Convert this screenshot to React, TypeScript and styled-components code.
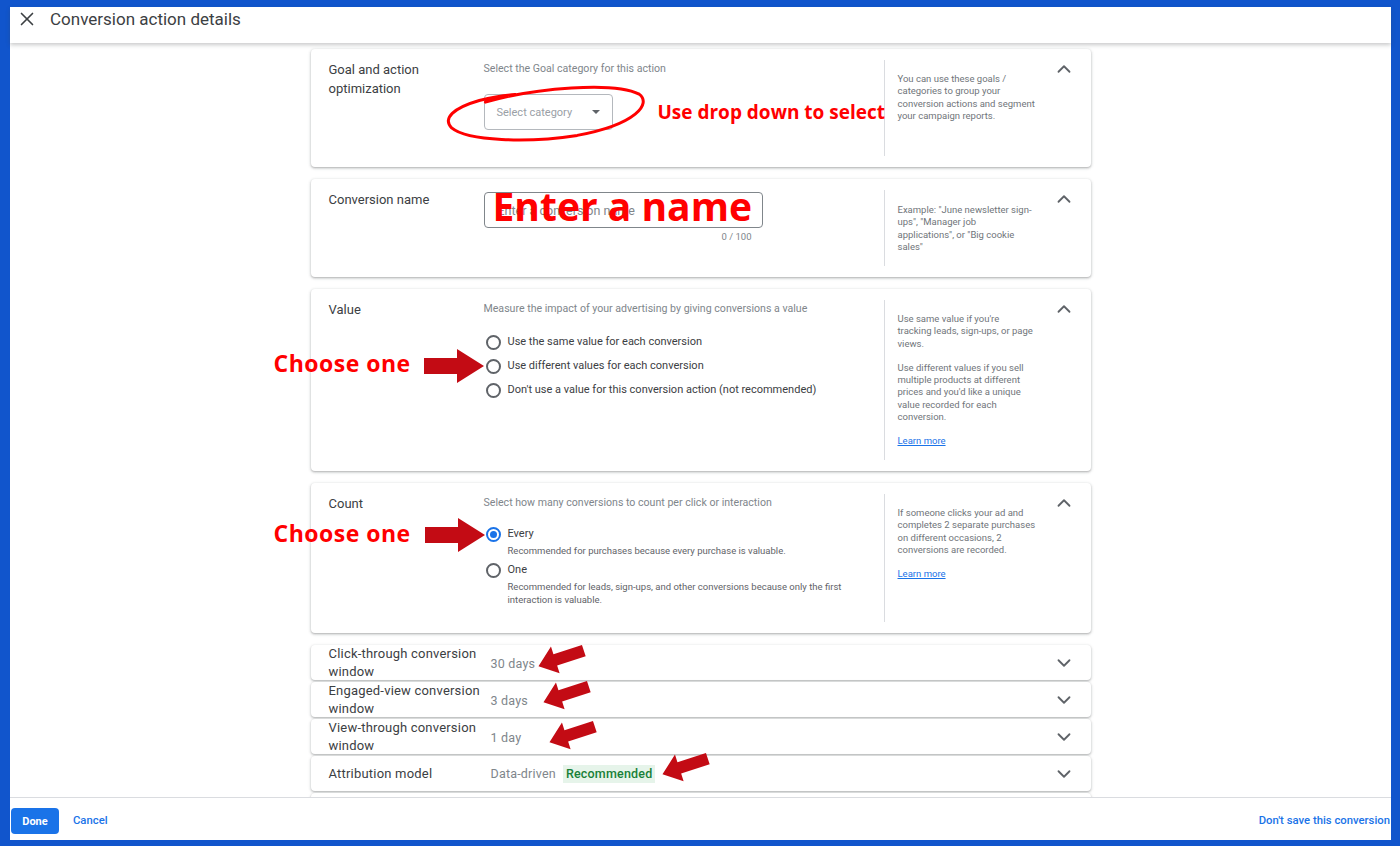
import styled, { createGlobalStyle } from "styled-components";
import { ChevronDown, ChevronUp, X } from "lucide-react";

const GlobalStyle = createGlobalStyle`
  html, body {
    margin: 0;
    padding: 0;
  }
  body {
    font-family: Roboto, "Liberation Sans", Arial, sans-serif;
    color: #3c4043;
  }
`;

const Frame = styled.div`
  width: 1400px;
  height: 846px;
  box-sizing: border-box;
  padding: 7px 9px 6px 10px;
  background: #1155cc;
`;

const Panel = styled.div`
  height: 100%;
  display: flex;
  flex-direction: column;
  background: #fff;
`;

const Header = styled.header`
  position: relative;
  z-index: 2;
  height: 36px;
  flex-shrink: 0;
  display: flex;
  align-items: flex-start;
  gap: 12px;
  padding-left: 6px;
  background: #fff;
  box-shadow: 0 2px 4px rgba(60, 64, 67, 0.28);
  svg {
    margin-top: 1px;
    color: #3c4043;
  }
`;

const Title = styled.h1`
  margin: 0;
  font-size: 17px;
  line-height: 24px;
  font-weight: 400;
  color: #3c4043;
`;

const Body = styled.main`
  flex: 1;
  overflow: hidden;
`;

const Column = styled.div`
  width: 780px;
  margin: 0 auto;
  padding-top: 6px;
  display: flex;
  flex-direction: column;
  gap: 12px;
`;

const Card = styled.section<{ $h: number }>`
  position: relative;
  height: ${p => p.$h}px;
  box-sizing: border-box;
  display: grid;
  grid-template-columns: 155px 400px 1fr 36px;
  padding: 11px 9px 11px 18px;
  background: #fff;
  border-radius: 4px;
  box-shadow: 0 1px 2px rgba(60, 64, 67, 0.3), 0 1px 3px 1px rgba(60, 64, 67, 0.12);
`;

const Label = styled.div`
  font-size: 13px;
  line-height: 19px;
  color: #3c4043;
  padding-right: 20px;
`;

const Main = styled.div`
  display: flex;
  flex-direction: column;
  align-items: flex-start;
`;

const Subtitle = styled.div`
  margin-top: 1px;
  font-size: 10.6px;
  line-height: 16px;
  color: #80868b;
`;

const Help = styled.aside<{ $top?: number }>`
  border-left: 1px solid #dadce0;
  padding: ${p => p.$top ?? 13}px 7px 0 13px;
  font-size: 9.5px;
  line-height: 12.3px;
  color: #70757a;
  p {
    margin: 0 0 12px;
  }
`;

const Line = styled.span`
  display: block;
  white-space: nowrap;
`;

const LearnMore = styled.a`
  color: #1a73e8;
  text-decoration: underline;
`;

const Toggle = styled.div`
  display: flex;
  justify-content: center;
  align-items: flex-start;
  color: #5f6368;
  svg {
    margin-top: -2px;
  }
`;

const Select = styled.div`
  margin-top: 17px;
  width: 129px;
  height: 36px;
  box-sizing: border-box;
  border: 1px solid #b4b8bd;
  border-radius: 4px;
  display: flex;
  align-items: center;
  justify-content: space-between;
  padding: 0 12px 0 12px;
  font-size: 11px;
  color: #9aa0a6;
  &::after {
    content: "";
    border-left: 4px solid transparent;
    border-right: 4px solid transparent;
    border-top: 4px solid #5f6368;
  }
`;

const Field = styled.input`
  margin-top: 2px;
  width: 279px;
  height: 36px;
  box-sizing: border-box;
  border: 1px solid #80868b;
  border-radius: 4px;
  padding: 0 13px;
  font-family: inherit;
  font-size: 12.5px;
  color: #3c4043;
  &::placeholder {
    color: #80868b;
  }
`;

const Counter = styled.div`
  width: 279px;
  box-sizing: border-box;
  padding-right: 11px;
  margin-top: 3px;
  text-align: right;
  font-size: 9.5px;
  line-height: 12px;
  color: #80868b;
`;

const Options = styled.div<{ $gap: number; $top: number }>`
  margin-top: ${p => p.$top}px;
  display: flex;
  flex-direction: column;
  gap: ${p => p.$gap}px;
`;

const Option = styled.label<{ $lh: number }>`
  display: flex;
  align-items: flex-start;
  gap: 7px;
  padding-left: 2px;
  font-size: 11px;
  line-height: ${p => p.$lh}px;
  color: #3c4043;
`;

const Radio = styled.span<{ $on?: boolean; $lh: number }>`
  flex-shrink: 0;
  width: 15px;
  height: 15px;
  box-sizing: border-box;
  margin-top: ${p => (p.$lh - 15) / 2}px;
  border-radius: 50%;
  border: 2px solid ${p => (p.$on ? "#1a73e8" : "#5f6368")};
  display: flex;
  align-items: center;
  justify-content: center;
  &::after {
    content: "";
    width: 7px;
    height: 7px;
    border-radius: 50%;
    background: ${p => (p.$on ? "#1a73e8" : "transparent")};
  }
`;

const OptionSub = styled.div`
  font-size: 9.5px;
  line-height: 13px;
  color: #5f6368;
`;

const Rows = styled.div`
  display: flex;
  flex-direction: column;
  gap: 2px;
`;

const Row = styled.div`
  position: relative;
  height: 35px;
  display: grid;
  grid-template-columns: 162px 1fr 36px;
  align-items: center;
  padding: 0 9px 0 18px;
  background: #fff;
  border-radius: 4px;
  box-shadow: 0 1px 2px rgba(60, 64, 67, 0.3), 0 1px 3px 1px rgba(60, 64, 67, 0.1);
`;

const RowLabel = styled.div`
  font-size: 13px;
  letter-spacing: 0.2px;
  line-height: 18px;
  color: #3c4043;
`;

const RowValue = styled.div`
  display: flex;
  align-items: center;
  gap: 7px;
  font-size: 12.5px;
  letter-spacing: 0.2px;
  color: #80868b;
`;

const Chip = styled.span`
  padding: 0 3px;
  height: 18px;
  line-height: 18px;
  background: #e6f4ea;
  color: #188038;
  font-weight: 500;
`;

const RowToggle = styled.div`
  display: flex;
  justify-content: center;
  color: #5f6368;
`;

const Footer = styled.footer`
  height: 43px;
  flex-shrink: 0;
  box-sizing: border-box;
  border-top: 1px solid #dadce0;
  display: flex;
  align-items: flex-start;
  padding: 10px 1px 0 1px;
  gap: 14px;
  font-size: 11.3px;
  line-height: 26px;
`;

const Done = styled.button`
  width: 48px;
  height: 26px;
  border: 0;
  border-radius: 4px;
  background: #1a73e8;
  color: #fff;
  font-family: inherit;
  font-size: 11px;
  font-weight: 700;
`;

const TextLink = styled.a<{ $end?: boolean }>`
  color: #1a73e8;
  font-weight: 500;
  text-decoration: none;
  margin-left: ${p => (p.$end ? "auto" : "0")};
`;

/* red annotations drawn over the screenshot */
const Note = styled.span<{ $x: number; $y: number; $size: number; $track?: number }>`
  position: absolute;
  z-index: 3;
  left: ${p => p.$x}px;
  top: ${p => p.$y}px;
  transform: translateY(-50%);
  white-space: nowrap;
  font-family: "Open Sans", "DejaVu Sans", sans-serif;
  font-weight: 700;
  font-size: ${p => p.$size}px;
  letter-spacing: ${p => p.$track ?? 0}px;
  line-height: 1;
  color: #ff0000;
  pointer-events: none;
`;

const Mark = styled.svg<{ $x: number; $y: number; $rot?: number }>`
  position: absolute;
  z-index: 3;
  left: ${p => p.$x}px;
  top: ${p => p.$y}px;
  transform: rotate(${p => p.$rot ?? 0}deg);
  overflow: visible;
  pointer-events: none;
`;

function BlockArrow({ x, y }: { x: number; y: number }) {
  return (
    <Mark $x={x} $y={y} width="60" height="34" viewBox="0 0 60 34">
      <polygon points="0,9 33,9 33,0 60,17 33,34 33,25 0,25" fill="#c30b14" />
    </Mark>
  );
}

function SlantArrow({ x, y }: { x: number; y: number }) {
  return (
    <Mark $x={x} $y={y} $rot={-18} width="48" height="28" viewBox="0 0 48 28">
      <polygon points="0,15 18,0 18,8 48,8 48,20 18,20 18,28" fill="#c30b14" />
    </Mark>
  );
}

function Chevron({ open }: { open?: boolean }) {
  return open ? <ChevronUp size={22} strokeWidth={2} /> : <ChevronDown size={22} strokeWidth={2} />;
}

function Lines({ lines }: { lines: string[] }) {
  return (
    <>
      {lines.map(l => (
        <Line key={l}>{l}</Line>
      ))}
    </>
  );
}

const windows = [
  { label: "Click-through conversion window", value: "30 days", ax: 226, ay: -1 },
  { label: "Engaged-view conversion window", value: "3 days", ax: 231, ay: -2 },
  { label: "View-through conversion window", value: "1 day", ax: 237, ay: 1 },
];

export default function App() {
  return (
    <Frame>
      <GlobalStyle />
      <Panel>
        <Header>
          <X size={22} strokeWidth={1.8} />
          <Title>Conversion action details</Title>
        </Header>
        <Body>
          <Column>
            <Card $h={118}>
              <Label>Goal and action optimization</Label>
              <Main>
                <Subtitle>Select the Goal category for this action</Subtitle>
                <Select>Select category</Select>
              </Main>
              <Help>
                <Lines
                  lines={[
                    "You can use these goals /",
                    "categories to group your",
                    "conversion actions and segment",
                    "your campaign reports.",
                  ]}
                />
              </Help>
              <Toggle>
                <Chevron open />
              </Toggle>
              <Mark $x={135} $y={36} width="200" height="56" viewBox="0 0 200 56">
                <path
                  d="M40 14 C90 2 170 0 194 14 C206 24 190 44 130 52 C80 57 20 52 5 38 C-4 28 8 18 34 12 C50 9 62 8 70 8"
                  fill="none"
                  stroke="#ff0000"
                  strokeWidth="3"
                  strokeLinecap="round"
                  transform="rotate(-3 100 28)"
                />
              </Mark>
              <Note $x={347} $y={63} $size={19}>Use drop down to select</Note>
            </Card>

            <Card $h={98}>
              <Label>Conversion name</Label>
              <Main>
                <Field placeholder="Enter a conversion name" />
                <Counter>0 / 100</Counter>
              </Main>
              <Help $top={14}>
                <Lines
                  lines={[
                    'Example: "June newsletter sign-',
                    'ups", "Manager job',
                    'applications", or "Big cookie',
                    'sales"',
                  ]}
                />
              </Help>
              <Toggle>
                <Chevron open />
              </Toggle>
              <Note $x={182} $y={26} $size={39}>Enter a name</Note>
            </Card>

            <Card $h={182}>
              <Label>Value</Label>
              <Main>
                <Subtitle>Measure the impact of your advertising by giving conversions a value</Subtitle>
                <Options $gap={0} $top={13}>
                  {[
                    "Use the same value for each conversion",
                    "Use different values for each conversion",
                    "Don't use a value for this conversion action (not recommended)",
                  ].map(text => (
                    <Option key={text} $lh={24}>
                      <Radio $lh={24} />
                      {text}
                    </Option>
                  ))}
                </Options>
              </Main>
              <Help>
                <p>
                  <Lines lines={["Use same value if you're", "tracking leads, sign-ups, or page", "views."]} />
                </p>
                <p>
                  <Lines
                    lines={[
                      "Use different values if you sell",
                      "multiple products at different",
                      "prices and you'd like a unique",
                      "value recorded for each",
                      "conversion.",
                    ]}
                  />
                </p>
                <LearnMore href="#">Learn more</LearnMore>
              </Help>
              <Toggle>
                <Chevron open />
              </Toggle>
              <Note $x={-37} $y={74} $size={23} $track={0.5}>Choose one</Note>
              <BlockArrow x={113} y={60} />
            </Card>

            <Card $h={150}>
              <Label>Count</Label>
              <Main>
                <Subtitle>Select how many conversions to count per click or interaction</Subtitle>
                <Options $gap={3} $top={13}>
                  <Option $lh={20}>
                    <Radio $lh={20} $on />
                    <div>
                      Every
                      <OptionSub>Recommended for purchases because every purchase is valuable.</OptionSub>
                    </div>
                  </Option>
                  <Option $lh={20}>
                    <Radio $lh={20} />
                    <div>
                      One
                      <OptionSub>
                        Recommended for leads, sign-ups, and other conversions because only the first
                        interaction is valuable.
                      </OptionSub>
                    </div>
                  </Option>
                </Options>
              </Main>
              <Help>
                <p>
                  <Lines
                    lines={[
                      "If someone clicks your ad and",
                      "completes 2 separate purchases",
                      "on different occasions, 2",
                      "conversions are recorded.",
                    ]}
                  />
                </p>
                <LearnMore href="#">Learn more</LearnMore>
              </Help>
              <Toggle>
                <Chevron open />
              </Toggle>
              <Note $x={-37} $y={50} $size={23} $track={0.5}>Choose one</Note>
              <BlockArrow x={114} y={35} />
            </Card>

            <Rows>
              {windows.map(w => (
                <Row key={w.label}>
                  <RowLabel>{w.label}</RowLabel>
                  <RowValue>{w.value}</RowValue>
                  <RowToggle>
                    <Chevron />
                  </RowToggle>
                  <SlantArrow x={w.ax} y={w.ay} />
                </Row>
              ))}
              <Row>
                <RowLabel>Attribution model</RowLabel>
                <RowValue>
                  Data-driven <Chip>Recommended</Chip>
                </RowValue>
                <RowToggle>
                  <Chevron />
                </RowToggle>
                <SlantArrow x={350} y={-4} />
              </Row>
              <Row />
            </Rows>
          </Column>
        </Body>
        <Footer>
          <Done>Done</Done>
          <TextLink href="#">Cancel</TextLink>
          <TextLink href="#" $end>
            Don't save this conversion
          </TextLink>
        </Footer>
      </Panel>
    </Frame>
  );
}
